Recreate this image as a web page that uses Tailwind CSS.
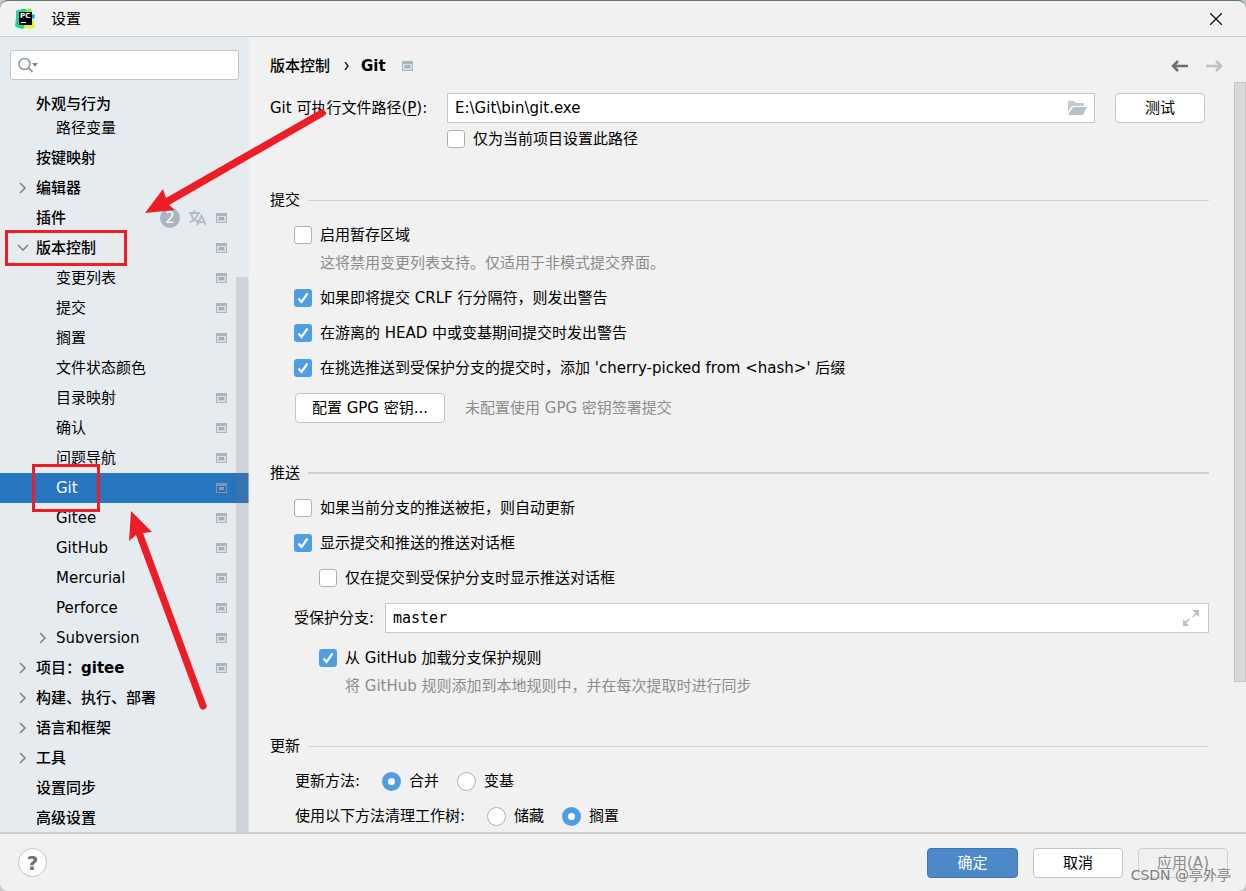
<!DOCTYPE html>
<html lang="zh-CN">
<head>
  <meta charset="UTF-8" />
  <meta name="viewport" content="width=device-width, initial-scale=1.0"/>
  <title>设置</title>
  <script src="https://cdn.jsdelivr.net/npm/@tailwindcss/browser@4"></script>
</head>
<body class="bg-[#c3cbc3] font-['DejaVu_Sans','Noto_Sans_CJK_SC',sans-serif] text-[15px] leading-5 text-black">

  <!-- Shared icons -->
  <svg class="hidden">
    <symbol id="scope" viewBox="0 0 11 10">
      <path d="M0 0h11v10H0z" fill="#a9b5bd"/>
      <path d="M1 3h9v6H1z" fill="#dbe1e6"/>
      <path d="M2 4h7v4H2z" fill="#c8d0d6"/>
      <path d="M3 4h5v3H3z" fill="#a4b0b9"/>
    </symbol>
    <symbol id="scope-active" viewBox="0 0 11 10">
      <path d="M0 0h11v10H0z" fill="#7e9ab3"/>
      <path d="M1 3h9v6H1z" fill="#2f6fae"/>
      <path d="M3 4h5v3H3z" fill="#8a9fb2"/>
    </symbol>
    <symbol id="right" viewBox="0 0 10 12">
      <path d="M2 1l5 5-5 5" fill="none" stroke="#7f8488" stroke-width="1.600"/>
    </symbol>
    <symbol id="down" viewBox="0 0 12 10">
      <path d="M1 2l5 5 5-5" fill="none" stroke="#7f8488" stroke-width="1.600"/>
    </symbol>
    <symbol id="check" viewBox="0 0 18 18">
      <path d="M4.500 9.500l3 3.500 6-8.500" fill="none" stroke="#fff" stroke-width="2.200"/>
    </symbol>
  </svg>

  <div class="relative flex h-screen flex-col overflow-hidden rounded-lg border-t border-[#5f7a62] bg-[#f1f1f1]">

    <!-- Title bar -->
    <header class="flex h-9 shrink-0 items-center border-b border-[#cfcfcf] pr-6 pl-[15px]">
      <svg class="size-5" viewBox="0 0 20 20">
        <path d="M1 2l6-2 8 0 2 4-4 13-6 3-6-2 1-7z" fill="#21d789"/>
        <path d="M1 2l4-1 1 9-4 8-2-1 1-8z" fill="#2fc8a0"/>
        <path d="M11 0h5l1 4h-6z" fill="#9be84a"/>
        <path d="M17 5l3 1-1 4-3-1z" fill="#07a8f2"/>
        <path d="M16 9l3 3 1 7-6 1-5-2 1-4z" fill="#e8ee3c"/>
        <path d="M4 3h13v13H4z" fill="#000"/>
        <path d="M6 13h5v1H6z" fill="#fff"/>
        <text x="5" y="9" font-size="7" font-weight="700" fill="#fff">PC</text>
      </svg>
      <h1 class="ml-4 grow">设置</h1>
      <button aria-label="关闭" class="size-3">
        <svg viewBox="0 0 12 12"><path d="M0 0l12 12M12 0L0 12" stroke="#111" stroke-width="1.300"/></svg>
      </button>
    </header>

    <div class="flex min-h-0 grow">

      <!-- Settings tree -->
      <aside class="relative w-[249px] shrink-0 overflow-hidden bg-[#e6ebf0]">
        <div class="mx-[10px] mt-[13px] flex h-[30px] items-center rounded-[3px] border border-[#c4c4c4] bg-white pl-[7px]">
          <svg class="h-4 w-5 shrink-0" viewBox="0 0 20 16" fill="none">
            <circle cx="6.500" cy="7" r="5.500" stroke="#8a98a3" stroke-width="1.500"/>
            <path d="M10.500 11l4 4" stroke="#8a98a3" stroke-width="1.800"/>
            <path d="M14 6h6l-3 4z" fill="#7d8b96"/>
          </svg>
          <input type="text" aria-label="搜索设置" class="min-w-0 grow outline-none" />
        </div>

        <ul class="mt-3">
          <li class="flex h-6 items-center pl-9 font-medium">外观与行为</li>
          <li class="mb-[3px] flex h-6 items-center pl-14">路径变量</li>
          <li class="flex h-[30px] items-center pl-9 font-medium">按键映射</li>
          <li class="flex h-[30px] items-center pl-[18px] font-medium"><svg class="mr-2 h-3 w-[10px]"><use href="#right"/></svg>编辑器</li>
          <li class="flex h-[30px] items-center pr-[22px] pl-9 font-medium">
            <span class="grow">插件</span>
            <span class="flex size-5 items-center justify-center rounded-full bg-[#a9b5bd] font-normal text-white">2</span>
            <svg class="mr-[10px] ml-[9px] h-4 w-[17px]" viewBox="0 0 17 16" fill="none" stroke="#b4bec6" stroke-width="1.900">
              <path d="M0 3h11M5.500 0v3M2 3.500c1 4 4 7 7 8M9 3.500c-1 4-4 7-8.500 9M8 15.500l4.500-10 4.500 10M9.500 12h6"/>
            </svg>
            <svg class="h-[10px] w-[11px]"><use href="#scope"/></svg>
          </li>
          <li class="flex h-[30px] items-center pr-[22px] pl-[17px] font-medium"><svg class="mr-[7px] h-[10px] w-3"><use href="#down"/></svg><span class="grow">版本控制</span><svg class="h-[10px] w-[11px]"><use href="#scope"/></svg></li>
          <li class="flex h-[30px] items-center justify-between pr-[22px] pl-14">变更列表<svg class="h-[10px] w-[11px]"><use href="#scope"/></svg></li>
          <li class="flex h-[30px] items-center justify-between pr-[22px] pl-14">提交<svg class="h-[10px] w-[11px]"><use href="#scope"/></svg></li>
          <li class="flex h-[30px] items-center justify-between pr-[22px] pl-14">搁置<svg class="h-[10px] w-[11px]"><use href="#scope"/></svg></li>
          <li class="flex h-[30px] items-center pl-14">文件状态颜色</li>
          <li class="flex h-[30px] items-center justify-between pr-[22px] pl-14">目录映射<svg class="h-[10px] w-[11px]"><use href="#scope"/></svg></li>
          <li class="flex h-[30px] items-center justify-between pr-[22px] pl-14">确认<svg class="h-[10px] w-[11px]"><use href="#scope"/></svg></li>
          <li class="flex h-[30px] items-center justify-between pr-[22px] pl-14">问题导航<svg class="h-[10px] w-[11px]"><use href="#scope"/></svg></li>
          <li class="flex h-[30px] items-center justify-between bg-[#2675bf] pr-[22px] pl-14 text-white">Git<svg class="h-[10px] w-[11px]"><use href="#scope-active"/></svg></li>
          <li class="flex h-[30px] items-center justify-between pr-[22px] pl-14">Gitee<svg class="h-[10px] w-[11px]"><use href="#scope"/></svg></li>
          <li class="flex h-[30px] items-center justify-between pr-[22px] pl-14">GitHub<svg class="h-[10px] w-[11px]"><use href="#scope"/></svg></li>
          <li class="flex h-[30px] items-center justify-between pr-[22px] pl-14">Mercurial<svg class="h-[10px] w-[11px]"><use href="#scope"/></svg></li>
          <li class="flex h-[30px] items-center justify-between pr-[22px] pl-14">Perforce<svg class="h-[10px] w-[11px]"><use href="#scope"/></svg></li>
          <li class="flex h-[30px] items-center pr-[22px] pl-[38px]"><svg class="mr-2 h-3 w-[10px]"><use href="#right"/></svg><span class="grow">Subversion</span><svg class="h-[10px] w-[11px]"><use href="#scope"/></svg></li>
          <li class="flex h-[30px] items-center pr-[22px] pl-[18px] font-medium"><svg class="mr-2 h-3 w-[10px]"><use href="#right"/></svg><span class="grow">项目：<b>gitee</b></span><svg class="h-[10px] w-[11px]"><use href="#scope"/></svg></li>
          <li class="flex h-[30px] items-center pl-[18px] font-medium"><svg class="mr-2 h-3 w-[10px]"><use href="#right"/></svg>构建、执行、部署</li>
          <li class="flex h-[30px] items-center pl-[18px] font-medium"><svg class="mr-2 h-3 w-[10px]"><use href="#right"/></svg>语言和框架</li>
          <li class="flex h-[30px] items-center pl-[18px] font-medium"><svg class="mr-2 h-3 w-[10px]"><use href="#right"/></svg>工具</li>
          <li class="flex h-[30px] items-center pl-9 font-medium">设置同步</li>
          <li class="flex h-[30px] items-center pl-9 font-medium">高级设置</li>
        </ul>

        <!-- Scrollbar thumb -->
        <div class="absolute top-60 right-0 bottom-0 w-[13px] border-r border-white/40 bg-[#737373]/20"></div>
      </aside>

      <!-- Git page -->
      <main class="relative min-w-0 grow overflow-hidden pr-[37px] pl-[21px]">
        <div class="mt-[19px] flex h-5 items-center">
          <span class="font-medium">版本控制</span>
          <svg class="ml-[14px] h-2 w-[6px]" viewBox="0 0 6 8"><path d="M1 0l3 4-3 4" fill="none" stroke="#222" stroke-width="1.500"/></svg>
          <b class="ml-[11px]">Git</b>
          <svg class="ml-4 h-[10px] w-[11px]"><use href="#scope"/></svg>
          <button aria-label="后退" class="mr-4 ml-auto h-3 w-[18px]">
            <svg viewBox="0 0 18 12" fill="none" stroke="#6e6e6e" stroke-width="2.500"><path d="M17 6H2M7 1L2 6l5 5"/></svg>
          </button>
          <button aria-label="前进" disabled class="-mr-[14px] h-3 w-[18px]">
            <svg viewBox="0 0 18 12" fill="none" stroke="#c0c0c0" stroke-width="2.500"><path d="M1 6h15M11 1l5 5-5 5"/></svg>
          </button>
        </div>

        <div class="mt-[17px] flex items-center pr-1">
          <label for="gitPath" class="w-[177px] shrink-0 whitespace-nowrap">Git 可执行文件路径(<u class="underline-offset-2">P</u>):</label>
          <div class="flex h-[30px] min-w-0 grow items-center border border-[#c9c9c9] bg-white pr-[7px] pl-[7px]">
            <input id="gitPath" type="text" value="E:\Git\bin\git.exe" class="min-w-0 grow outline-none" />
            <svg class="h-4 w-5" viewBox="0 0 20 16">
              <path d="M1 1h6l2 2h8v3H5L1 12z" fill="#c3cad0"/>
              <path d="M6 7h14l-4 8H1z" fill="#b9c1c7"/>
            </svg>
          </div>
          <button class="ml-5 h-[30px] w-[90px] rounded-[4px] border border-[#c4c4c4] bg-white">测试</button>
        </div>
        <label class="mt-[6px] ml-[177px] flex h-5 items-center gap-2">
          <input type="checkbox" class="size-[18px] appearance-none rounded-[3px] border border-[#b0b0b0] bg-white" />仅为当前项目设置此路径
        </label>

        <!-- Commit -->
        <h2 class="mt-[41px] flex h-5 items-center gap-2">提交<span class="h-px grow bg-[#d1d1d1]"></span></h2>
        <div class="pl-6">
          <label class="mt-[15px] flex h-5 items-center gap-2">
            <input type="checkbox" class="size-[18px] appearance-none rounded-[3px] border border-[#b0b0b0] bg-white" />启用暂存区域
          </label>
          <p class="mt-2 pl-[26px] text-[#8c8c8c]">这将禁用变更列表支持。仅适用于非模式提交界面。</p>
          <label class="relative mt-[15px] flex h-5 items-center gap-2">
            <input type="checkbox" checked class="size-[18px] appearance-none rounded-[3px] bg-[#4f9ee3]" />
            <svg class="pointer-events-none absolute left-0 size-[18px]"><use href="#check"/></svg>如果即将提交 CRLF 行分隔符，则发出警告
          </label>
          <label class="relative mt-[15px] flex h-5 items-center gap-2">
            <input type="checkbox" checked class="size-[18px] appearance-none rounded-[3px] bg-[#4f9ee3]" />
            <svg class="pointer-events-none absolute left-0 size-[18px]"><use href="#check"/></svg>在游离的 HEAD 中或变基期间提交时发出警告
          </label>
          <label class="relative mt-[15px] flex h-5 items-center gap-2">
            <input type="checkbox" checked class="size-[18px] appearance-none rounded-[3px] bg-[#4f9ee3]" />
            <svg class="pointer-events-none absolute left-0 size-[18px]"><use href="#check"/></svg>在挑选推送到受保护分支的提交时，添加 'cherry-picked from &lt;hash&gt;' 后缀
          </label>
          <div class="mt-[15px] flex items-center gap-5">
            <button class="ml-px h-[30px] w-[150px] rounded-[4px] border border-[#c4c4c4] bg-white">配置 GPG 密钥...</button>
            <span class="text-[#8c8c8c]">未配置使用 GPG 密钥签署提交</span>
          </div>
        </div>

        <!-- Push -->
        <h2 class="mt-10 flex h-5 items-center gap-2">推送<span class="h-[2px] grow bg-[#d1d1d1]"></span></h2>
        <div class="pl-6">
          <label class="mt-[15px] flex h-5 items-center gap-2">
            <input type="checkbox" class="size-[18px] appearance-none rounded-[3px] border border-[#b0b0b0] bg-white" />如果当前分支的推送被拒，则自动更新
          </label>
          <label class="relative mt-[15px] flex h-5 items-center gap-2">
            <input type="checkbox" checked class="size-[18px] appearance-none rounded-[3px] bg-[#4f9ee3]" />
            <svg class="pointer-events-none absolute left-0 size-[18px]"><use href="#check"/></svg>显示提交和推送的推送对话框
          </label>
          <label class="mt-[15px] ml-[25px] flex h-5 items-center gap-2">
            <input type="checkbox" class="size-[18px] appearance-none rounded-[3px] border border-[#b0b0b0] bg-white" />仅在提交到受保护分支时显示推送对话框
          </label>
          <div class="mt-[15px] flex items-center">
            <label for="branches" class="w-[91px] shrink-0 whitespace-nowrap">受保护分支:</label>
            <div class="flex h-[30px] min-w-0 grow items-center border border-[#c9c9c9] bg-white pr-[9px] pl-[7px]">
              <input id="branches" type="text" value="master" class="min-w-0 grow font-['DejaVu_Sans_Mono',monospace] outline-none" />
              <svg class="size-4" viewBox="0 0 16 16" fill="#b9c1c7">
                <path d="M9 0h7v7l-2.500-2.500-3.500 3-1-1 3.500-3.500zM0 16V9l2.500 2.500L6 8.500l1 1-3.500 3.500L6 16z"/>
              </svg>
            </div>
          </div>
          <label class="relative mt-[15px] ml-[25px] flex h-5 items-center gap-2">
            <input type="checkbox" checked class="size-[18px] appearance-none rounded-[3px] bg-[#4f9ee3]" />
            <svg class="pointer-events-none absolute left-0 size-[18px]"><use href="#check"/></svg>从 GitHub 加载分支保护规则
          </label>
          <p class="mt-2 pl-[51px] text-[#8c8c8c]">将 GitHub 规则添加到本地规则中，并在每次提取时进行同步</p>
        </div>

        <!-- Update -->
        <h2 class="mt-10 flex h-5 items-center gap-2">更新<span class="h-px grow bg-[#d1d1d1]"></span></h2>
        <div class="pl-[25px]">
          <div role="radiogroup" aria-label="更新方法" class="mt-[15px] flex h-5 items-center">
            <span class="w-[87px]">更新方法:</span>
            <label class="flex w-[75px] items-center gap-2"><input type="radio" name="update" checked class="size-[19px] appearance-none rounded-full border-[6px] border-[#4f9ee3] bg-white" />合并</label>
            <label class="flex items-center gap-2"><input type="radio" name="update" class="size-[19px] appearance-none rounded-full border border-[#b0b0b0] bg-white" />变基</label>
          </div>
          <div role="radiogroup" aria-label="使用以下方法清理工作树" class="mt-[15px] flex h-5 items-center">
            <span class="w-[192px]">使用以下方法清理工作树:</span>
            <label class="flex w-[75px] items-center gap-2"><input type="radio" name="clean" class="size-[19px] appearance-none rounded-full border border-[#b0b0b0] bg-white" />储藏</label>
            <label class="flex items-center gap-2"><input type="radio" name="clean" checked class="size-[19px] appearance-none rounded-full border-[6px] border-[#4f9ee3] bg-white" />搁置</label>
          </div>
        </div>

        <!-- Scrollbar thumb -->
        <div class="absolute top-[45px] right-0 h-[600px] w-3 border border-[#c4c4c4] bg-[#d9d9d9]"></div>
      </main>
    </div>

    <!-- Buttons -->
    <footer class="flex h-[59px] shrink-0 items-center gap-[15px] border-t-2 border-[#cfcfcf] pr-[18px] pl-[18px]">
      <button aria-label="帮助" class="mr-auto size-[29px] rounded-full border border-[#c4c4c4] bg-white text-xl font-bold text-[#6e6e6e]">?</button>
      <button class="h-[30px] w-[91px] rounded-[4px] border border-[#3d75b1] bg-[#4d89c9] text-white">确定</button>
      <button class="h-[30px] w-[90px] rounded-[4px] border border-[#c4c4c4] bg-white">取消</button>
      <button disabled class="h-[30px] w-[90px] rounded-[4px] border border-[#cfcfcf] text-[#8c8c8c]">应用(A)</button>
    </footer>

    <p class="absolute right-[15px] bottom-[6px] text-sm text-[#7d7d7d]">CSDN @亭外亭</p>

    <!-- Red marks -->
    <svg class="pointer-events-none absolute top-0 left-0 h-[720px] w-[340px]" viewBox="0 1 340 720" fill="#ee1c25">
      <path d="M6.500 231.500h119v33h-119zM33.500 465.500h65v45h-65z" fill="none" stroke="#ee1c25" stroke-width="3"/>
      <path d="M145 213l18-24 3 9 154-88a3.500 3.500 0 0 1 4 6L169 205l6 5z"/>
      <path d="M131 511l21 21-9 1 63 171a3.500 3.500 0 0 1-6 4L136 535l-7 6z"/>
    </svg>
  </div>
</body>
</html>
